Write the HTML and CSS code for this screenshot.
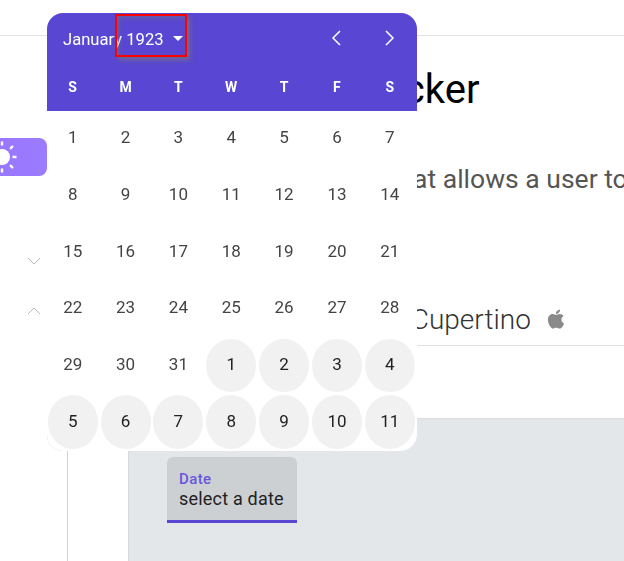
FILE: index.html
```html
<!DOCTYPE html>
<html lang="en">
<head>
    <meta charset="UTF-8">
    <meta name="viewport" content="width=device-width, initial-scale=1.0">
    <title>Date Picker</title>
    <link rel="stylesheet" href="styles.css">
</head>
<body>
    <div class="topbar"></div>
    <div class="page">
        <aside class="sidebar">
            <div class="theme-btn">
                <svg class="sun" width="36" height="36" viewBox="0 0 36 36">
                    <circle cx="18" cy="18" r="8" fill="#fff"/>
                    <g stroke="#fff" stroke-width="2.4">
                        <path d="M18 2.500v4M18 29.500v4M28.500 18h4"/>
                        <path d="M26.800 9.200l1.500-1.500M26.800 26.800l1.500 1.500" stroke-linecap="round"/>
                    </g>
                </svg>
            </div>
            <svg class="nav-chev nav-down" width="14" height="8" viewBox="0 0 14 8"><path d="M1 1l6 6 6-6"/></svg>
            <svg class="nav-chev nav-up" width="14" height="8" viewBox="0 0 14 8"><path d="M1 7l6-6 6 6"/></svg>
        </aside>
        <main class="content">
            <h1>Material Date Picker</h1>
            <p class="lead">A date picker is a tool that allows a user to</p>
            <div class="tabs">
                <span class="tab">Material</span>
                <span class="tab">Cupertino
                    <svg class="apple" width="18" height="22" viewBox="0 0 384 512"><path d="M318.700 268.700c-.2-36.700 16.400-64.400 50-84.800-18.800-26.900-47.200-41.700-84.700-44.600-35.500-2.800-74.300 20.700-88.500 20.700-15 0-49.400-19.700-76.400-19.700C63.300 141.200 4 184.800 4 273.500q0 39.300 14.400 81.200c12.800 36.700 59 126.700 107.200 125.200 25.200-.6 43-17.900 75.800-17.900 31.800 0 48.300 17.900 76.400 17.900 48.600-.7 90.400-82.500 102.600-119.300-65.200-30.700-61.700-90-61.700-91.900zm-56.600-164.200c27.300-32.400 24.800-61.900 24-72.500-24.100 1.400-52 16.400-67.900 34.900-17.500 19.800-27.800 44.300-25.600 71.900 26.100 2 49.900-11.400 69.500-34.300z"/></svg>
                </span>
            </div>
            <div class="preview">
                <div class="field">
                    <div class="field-label">Date</div>
                    <div class="field-value">select a date</div>
                </div>
            </div>
        </main>
    </div>

    <div class="picker">
        <div class="picker-head">
            <div class="month-row">
                <span class="month">January 1923</span>
                <span class="caret"></span>
                <svg class="arrow arrow-prev" width="12" height="18" viewBox="0 0 12 18"><path d="M9 2L2 9l7 7"/></svg>
                <svg class="arrow" width="12" height="18" viewBox="0 0 12 18"><path d="M3 2l7 7-7 7"/></svg>
            </div>
            <div class="week-row">
                <span>S</span><span>M</span><span>T</span><span>W</span><span>T</span><span>F</span><span>S</span>
            </div>
            <div class="highlight"></div>
        </div>
        <div class="days">
            <div class="day">1</div><div class="day">2</div><div class="day">3</div><div class="day">4</div><div class="day">5</div><div class="day">6</div><div class="day">7</div>
            <div class="day">8</div><div class="day">9</div><div class="day">10</div><div class="day">11</div><div class="day">12</div><div class="day">13</div><div class="day">14</div>
            <div class="day">15</div><div class="day">16</div><div class="day">17</div><div class="day">18</div><div class="day">19</div><div class="day">20</div><div class="day">21</div>
            <div class="day">22</div><div class="day">23</div><div class="day">24</div><div class="day">25</div><div class="day">26</div><div class="day">27</div><div class="day">28</div>
            <div class="day">29</div><div class="day">30</div><div class="day">31</div><div class="day other">1</div><div class="day other">2</div><div class="day other">3</div><div class="day other">4</div>
            <div class="day other">5</div><div class="day other">6</div><div class="day other">7</div><div class="day other">8</div><div class="day other">9</div><div class="day other">10</div><div class="day other">11</div>
        </div>
    </div>
</body>
</html>
```
FILE: styles.css
```css
html, body {
    height: 100%;
}
body {
    font-family: Roboto, "Liberation Sans", sans-serif;
    background-color: #fff;
    margin: 0;
    overflow: hidden;
}
.topbar {
    height: 35px;
    border-bottom: 1px solid #e2e2e2;
}
.page {
    display: flex;
    height: 525px;
}
.sidebar {
    flex: 0 0 67px;
    border-right: 1px solid #d2d2d2;
    overflow: hidden;
    display: flex;
    flex-direction: column;
    align-items: flex-start;
}
.theme-btn {
    width: 60px;
    height: 38px;
    margin: 102px 0 0 -13px;
    background: linear-gradient(90deg, #9a76ff, #9b7bff);
    border-radius: 8px;
    display: flex;
    align-items: center;
    flex-shrink: 0;
}
.sun {
    margin-left: -3px;
}
.nav-chev {
    margin-left: 27px;
    fill: none;
    stroke: #b9b9b9;
    stroke-width: 1;
    flex-shrink: 0;
}
.nav-down {
    margin-top: 81px;
}
.nav-up {
    margin-top: 42px;
}
.content {
    flex: 1;
    min-width: 0;
    display: flex;
    flex-direction: column;
    overflow: hidden;
}
h1 {
    font-size: 40px;
    font-weight: 400;
    line-height: 48px;
    color: #000;
    margin: 30px 0 0 53px;
    white-space: nowrap;
}
.lead {
    font-size: 26.500px;
    font-weight: 400;
    line-height: 36px;
    color: #555;
    margin: 47px 0 0 62px;
    white-space: nowrap;
}
.tabs {
    display: flex;
    gap: 183px;
    height: 52px;
    margin-top: 96px;
    padding-left: 60px;
    border-bottom: 1px solid #e0e0e0;
    font-size: 28px;
    font-weight: 300;
    color: #333;
    white-space: nowrap;
    align-items: center;
}
.tab {
    display: flex;
    align-items: center;
}
.apple {
    fill: #8a8a8a;
    margin-left: 16px;
}
.preview {
    flex: 1;
    margin: 72px 0 0 60px;
    padding: 38px 0 0 38px;
    background-color: #e4e7ea;
    border-left: 1px solid #d8d8d8;
    border-top: 1px solid #dcdcdc;
}
.field {
    width: 118px;
    height: 63px;
    padding: 0 0 0 12px;
    background-color: #cdd0d3;
    border-bottom: 3px solid #5946d2;
    border-radius: 6px 6px 0 0;
}
.field-label {
    padding-top: 14px;
    font-size: 15px;
    line-height: 16px;
    font-weight: 500;
    letter-spacing: 0.4px;
    color: #6a55dd;
}
.field-value {
    font-size: 18px;
    line-height: 24px;
    letter-spacing: 0.2px;
    color: #222;
    white-space: nowrap;
}

.picker {
    position: absolute;
    left: 47px;
    top: 13px;
    width: 370px;
    height: 438px;
    background: linear-gradient(#5946d2 98px, #d8d3f5 98px);
    border-radius: 16px;
    overflow: hidden;
    display: flex;
    flex-direction: column;
    will-change: transform;
}
.picker-head {
    height: 98px;
    color: #fff;
    flex-shrink: 0;
}
.month-row {
    display: flex;
    align-items: center;
    height: 52px;
    padding: 0 22px 0 16px;
}
.month {
    font-size: 16.600px;
    font-weight: 400;
}
.caret {
    margin: -2px 0 0 9px;
    border-left: 5px solid transparent;
    border-right: 5px solid transparent;
    border-top: 5px solid #fff;
}
.arrow {
    fill: none;
    stroke: #fff;
    stroke-width: 1.500;
    margin: -2px 0 0 40px;
}
.arrow-prev {
    margin-left: auto;
}
.week-row {
    display: grid;
    grid-template-columns: repeat(7, 1fr);
    padding-top: 5px;
    font-size: 14px;
    font-weight: 700;
    line-height: 34px;
    text-align: center;
}
.week-row span {
    padding-right: 1.500px;
}
.highlight {
    position: absolute;
    left: 68px;
    top: 1px;
    width: 68px;
    height: 39px;
    border: 2px solid #f00;
    box-shadow: 3px 3px 5px rgba(120, 120, 120, 0.7), inset 2px 2px 5px rgba(120, 120, 120, 0.5);
}
.days {
    flex: 1;
    background-color: #fff;
    border-radius: 0 0 16px 16px;
    display: grid;
    grid-template-columns: repeat(7, 1fr);
    grid-template-rows: repeat(6, 1fr);
}
.day {
    margin: 1px 2.160px 2px 0.700px;
    padding-bottom: 3px;
    border-radius: 50%;
    display: flex;
    align-items: center;
    justify-content: center;
    font-size: 17px;
    font-weight: 400;
    color: #444;
}
.other {
    background-color: #f1f1f1;
    color: #222;
}
```
